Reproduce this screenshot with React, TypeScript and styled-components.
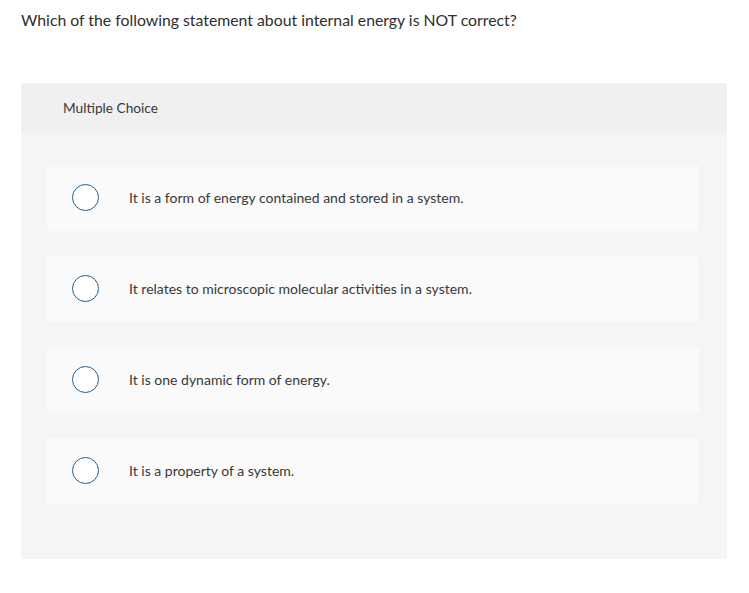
import React from "react";
import styled, { createGlobalStyle } from "styled-components";

const Global = createGlobalStyle`
  html, body { margin: 0; padding: 0; background: #ffffff; }
  body { font-family: "Lato", "Open Sans", Arial, sans-serif; color: #2b2b2b; }
`;

const Page = styled.div`
  padding: 10px 22px 0 21px;
  width: 749px;
  box-sizing: border-box;
`;

const Question = styled.div`
  font-size: 15.8px;
  line-height: 20px;
  color: #2e2e2e;
  margin-bottom: 53px;
`;

const Panel = styled.div`
  background: #f5f5f5;
  border-radius: 3px;
  overflow: hidden;
`;

const Header = styled.div`
  height: 50px;
  background: #f0f0f0;
  display: flex;
  align-items: center;
  padding-left: 42px;
  padding-bottom: 1px;
  box-sizing: border-box;
  font-size: 13.7px;
  color: #383838;
`;

const Options = styled.div`
  display: flex;
  flex-direction: column;
  gap: 25px;
  padding: 32px 28px 55px 26px;
`;

const Option = styled.label`
  height: 66px;
  background: #fafafa;
  border-radius: 3px;
  display: flex;
  align-items: center;
  padding-left: 25px;
  padding-bottom: 1px;
  box-sizing: border-box;
  cursor: pointer;
`;

const Radio = styled.span`
  width: 25px;
  height: 25px;
  border: 1.5px solid #1f5f8b;
  border-radius: 50%;
  box-sizing: content-box;
  flex-shrink: 0;
  background: #ffffff;
`;

const OptionText = styled.span`
  margin-left: 30px;
  font-size: 14px;
  color: #383838;
`;

const options = [
  "It is a form of energy contained and stored in a system.",
  "It relates to microscopic molecular activities in a system.",
  "It is one dynamic form of energy.",
  "It is a property of a system.",
];

export default function App() {
  return (
    <>
      <Global />
      <Page>
        <Question>Which of the following statement about internal energy is NOT correct?</Question>
        <Panel>
          <Header>Multiple Choice</Header>
          <Options>
            {options.map((o) => (
              <Option key={o}>
                <Radio />
                <OptionText>{o}</OptionText>
              </Option>
            ))}
          </Options>
        </Panel>
      </Page>
    </>
  );
}
